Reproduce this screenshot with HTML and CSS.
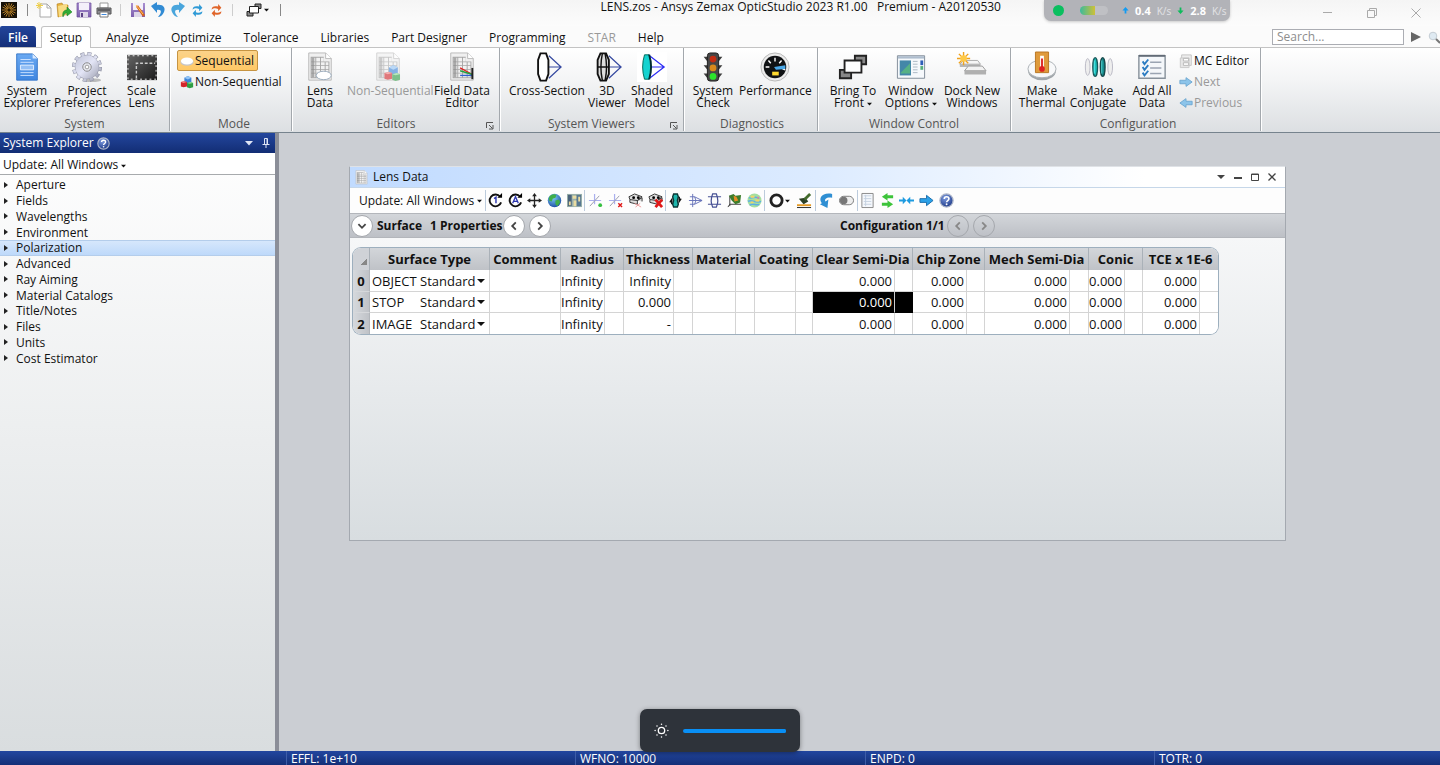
FILE: index.html
```
<!DOCTYPE html>
<html lang="en">
<head>
<meta charset="utf-8">
<title>LENS.zos - Ansys Zemax OpticStudio</title>
<link rel="stylesheet" href="styles.css">
</head>
<body>
<svg class="defs" aria-hidden="true">
  <defs>
    <linearGradient id="g-purple" x1="0" y1="0" x2="0" y2="1"><stop offset="0" stop-color="#a98fd0"/><stop offset="1" stop-color="#7d5fae"/></linearGradient>
    <linearGradient id="g-blue" x1="0" y1="0" x2="0" y2="1"><stop offset="0" stop-color="#6aa9f2"/><stop offset="1" stop-color="#3f86e0"/></linearGradient>
    <linearGradient id="g-gear" x1="0" y1="0" x2="32" y2="32" gradientUnits="userSpaceOnUse"><stop offset="0" stop-color="#b9bdd0"/><stop offset=".5" stop-color="#e3e5f6"/><stop offset="1" stop-color="#8d90a0"/></linearGradient>
    <linearGradient id="g-dark" x1="0" y1="0" x2="1" y2="1"><stop offset="0" stop-color="#666"/><stop offset="1" stop-color="#1b1b1b"/></linearGradient>
    <radialGradient id="g-help" cx=".4" cy=".3" r=".8"><stop offset="0" stop-color="#7d9be0"/><stop offset="1" stop-color="#14307f"/></radialGradient>
    <radialGradient id="g-globe" cx=".4" cy=".3" r=".8"><stop offset="0" stop-color="#7fd0f5"/><stop offset="1" stop-color="#123f9c"/></radialGradient>
    <symbol id="i-sheet" viewBox="0 0 32 32">
      <path d="M4 1h18l6 6v23H4z" fill="#f0f0f0" stroke="#b9b9b9"/><path d="M22 1v6h6" fill="#fff" stroke="#b9b9b9"/>
      <path d="M6 5h14v5h6v18H6z" fill="#a6a6a6"/><path d="M7 6h4v4H7zM12 6h4v4h-4zM17 6h3v4h-3zM7 11h4v3H7zM12 11h4v3h-4zM17 11h4v3h-4zM22 11h3v3h-3zM7 15h4v3H7zM12 15h4v3h-4zM17 15h4v3h-4zM22 15h3v3h-3zM7 19h4v3H7zM12 19h4v3h-4zM17 19h4v3h-4zM22 19h3v3h-3zM7 23h4v4H7zM12 23h4v4h-4zM17 23h4v4h-4zM22 23h3v4h-3z" fill="#f2f2f2"/><path d="M7 6h3v21H7z" fill="#8b8b8b" opacity=".7"/>
    </symbol>
    <symbol id="i-cubes" viewBox="0 0 16 16">
      <path d="M5 3l4-2 4 2v5l-4 2-4-2z" fill="#3b83d8"/><path d="M5 3l4-2 4 2-4 2z" fill="#93c4f5"/>
      <path d="M1 8l4-1 3 1v5l-4 1-3-1z" fill="#d3262b"/><path d="M1 8l4-1 3 1-4 1z" fill="#f48484"/>
      <path d="M8 9l4-1 3 1v5l-4 1-3-1z" fill="#2f9e44"/><path d="M8 9l4-1 3 1-4 1z" fill="#8fdd97"/>
    </symbol>
    <symbol id="i-help" viewBox="0 0 16 16">
      <circle cx="8" cy="8" r="7" fill="url(#g-help)" stroke="#aab3c8" stroke-width="1.400"/>
      <path d="M5.600 6.300c0-3.200 5-3.100 5-.1 0 1.800-2.500 1.900-2.500 3.700" fill="none" stroke="#fff" stroke-width="1.700"/><circle cx="8.100" cy="12" r="1" fill="#fff"/>
    </symbol>
    <symbol id="i-sync" viewBox="0 0 16 16">
      <path d="M2 7c0-4 3-5 8-4V0l4 4.500L10 9V6C7 5 4 5 2 7zM14 9c0 4-3 5-8 4v3l-4-4.500L6 7v3c3 1 6 1 8-1z"/>
    </symbol>
    <symbol id="i-wins" viewBox="0 0 32 32">
      <path d="M18 4h12v9H18zM2 19h12v9H2z" fill="#888" stroke="#222" stroke-width="2"/><path d="M7 9h18v13H7z" fill="#fff" stroke="#222" stroke-width="2"/>
    </symbol>
    <symbol id="i-tri" viewBox="0 0 6 4"><path d="M0 .5h6L3 3.800z"/></symbol>
    <symbol id="i-launch" viewBox="0 0 8 8"><path d="M.5 6V.5H7M3 3l3.500 3.500M7 3v4H3" fill="none" stroke="#555"/></symbol>
  </defs>
</svg>

<header class="titlebar">
  <nav class="quick" aria-label="Quick access">
    <button class="q" aria-label="Application menu"><svg viewBox="0 0 16 16"><path fill="#17120a" d="M0 0h16v16H0z"/><path d="M8 1v14M1 8h14M3 3l10 10M13 3L3 13M5 1.500l6 13M11 1.500l-6 13M1.500 5l13 6M1.500 11l13-6" stroke="#d9982c" stroke-width=".8"/><circle cx="8" cy="8" r="1.700" fill="#2a1a00"/></svg></button>
    <span class="bar first"></span>
    <button class="q" aria-label="New"><svg viewBox="0 0 16 16"><path d="M4 2h7l4 4v9H4z" fill="#fff" stroke="#a8a8a8"/><path d="M11 2v4h4" fill="none" stroke="#a8a8a8"/><path d="M3 0v7M0 3.500h7M1 1l4.500 5M5.500 1L1 6" stroke="#efcf49"/></svg></button>
    <button class="q" aria-label="Open"><svg viewBox="0 0 16 16"><path d="M1 2l5-1 1 2h5v9L2 15z" fill="#e7b33d" stroke="#b27c1b" stroke-width=".6"/><path d="M2 4l9-2v10L3 15z" fill="#f8dc83"/><path d="M7 15c-1-5 1-7 4-7V5l5 5-5 4v-3c-2 0-3 1-4 4z" fill="#31ab35" stroke="#16761f" stroke-width=".5"/></svg></button>
    <button class="q" aria-label="Save"><svg viewBox="0 0 16 16"><path d="M1 1h14v14H1z" fill="url(#g-purple)" stroke="#6b4b99" stroke-width=".7"/><path d="M3 1h10v7H3z" fill="#f4f0fa"/><path d="M4 10h8v5H4z" fill="#ddd6e8"/><path d="M5 11h2v4H5z" fill="#5c4285"/></svg></button>
    <button class="q" aria-label="Print"><svg viewBox="0 0 16 16"><path d="M4 1h8v5H4z" fill="#fff" stroke="#999"/><path d="M1 6h14v6H1z" fill="#8c8c92" stroke="#555"/><path d="M2 8h12" stroke="#333"/><path d="M4 10h8v5H4z" fill="#fff" stroke="#777"/><path d="M5.500 12.500h5" stroke="#4089dd"/></svg></button>
    <span class="bar pale"></span>
    <button class="q" aria-label="Save as"><svg viewBox="0 0 16 16"><path d="M1 1h14v14H1z" fill="url(#g-purple)"/><path d="M3 1h10v7H3z" fill="#f4f0fa"/><path d="M4 10h8v5H4z" fill="#ddd6e8"/><path d="M7 4l7 10" stroke="#d66220" stroke-width="2.500"/><path d="M6 3l7 9" stroke="#ffc75a"/></svg></button>
    <button class="q" aria-label="Undo"><svg viewBox="0 0 16 16"><path d="M1 4l6-4v3c6-1 9 3 7 7-1 3-4 5-6 5 4-4 4-8-1-7v3z" fill="#318bd4"/></svg></button>
    <button class="q" aria-label="Redo"><svg viewBox="0 0 16 16"><path d="M15 4L9 0v3C3 2 0 6 2 10c1 3 4 5 6 5-4-4-4-8 1-7v3z" fill="#49a5dc"/></svg></button>
    <button class="q blue" aria-label="Refresh"><svg><use href="#i-sync"/></svg></button>
    <button class="q orange" aria-label="Refresh all"><svg><use href="#i-sync"/></svg></button>
    <span class="bar pale"></span>
    <button class="q menu" aria-label="Windows"><svg><use href="#i-wins"/></svg><svg class="tri"><use href="#i-tri"/></svg></button>
    <span class="bar"></span>
  </nav>
  <h1 class="doc-title">LENS.zos - Ansys Zemax OpticStudio 2023 R1.00 &nbsp; Premium - A20120530</h1>
  <div class="win-controls">
    <button aria-label="Minimize window"><svg viewBox="0 0 12 12"><path d="M1 5.500h9"/></svg></button>
    <button aria-label="Restore window"><svg viewBox="0 0 12 12"><path d="M1.500 3.500h7v7h-7zM3.500 3.500v-2h7v7h-2"/></svg></button>
    <button aria-label="Close window"><svg viewBox="0 0 12 12"><path d="M1.500 1.500l9 9M10.500 1.500l-9 9"/></svg></button>
  </div>
</header>

<aside class="netmon" aria-label="Network monitor">
  <span class="dot"></span><span class="load"></span>
  <svg viewBox="0 0 8 8" class="net up"><path d="M4 0l3.500 4H5v3.500H3V4H.5z"/></svg><b>0.4</b><span class="unit">K/s</span>
  <svg viewBox="0 0 8 8" class="net down"><path d="M4 8l3.500-4H5V.5H3V4H.5z"/></svg><b>2.8</b><span class="unit">K/s</span>
</aside>

<nav class="tabs" aria-label="Ribbon tabs">
  <button class="file">File</button>
  <button class="tab active">Setup</button>
  <button class="tab">Analyze</button>
  <button class="tab">Optimize</button>
  <button class="tab">Tolerance</button>
  <button class="tab">Libraries</button>
  <button class="tab">Part Designer</button>
  <button class="tab">Programming</button>
  <button class="tab" disabled>STAR</button>
  <button class="tab">Help</button>
  <form class="search">
    <input type="text" placeholder="Search..." aria-label="Search">
    <button type="button" aria-label="Go"><svg viewBox="0 0 12 12"><path d="M1 1l10 5-10 5z" fill="#666"/></svg></button>
    <button type="button" aria-label="Find"><svg viewBox="0 0 12 12"><circle cx="5" cy="5" r="3.800" fill="#dfeaf2" stroke="#c4cdd4"/><path d="M8 8l4 4" stroke="#777" stroke-width="2"/></svg></button>
  </form>
</nav>

<section class="ribbon" aria-label="Setup">
  <div class="group g-system">
    <div class="tools">
      <button class="tool w54"><svg viewBox="0 0 32 32"><path d="M5 2h17l5 5v23H5z" fill="url(#g-blue)" stroke="#3676c9"/><path d="M22 2v5h5" fill="#d9eaff"/><path d="M9 8h11M9 11h14M9 22h14M9 25h14" stroke="#cfe3ff"/><path d="M9 14h14v5H9z" fill="#93bff5" stroke="#e6f1ff"/></svg>System<br>Explorer</button>
      <button class="tool w66"><svg viewBox="0 0 32 32"><ellipse cx="21" cy="30" rx="10" ry="2" fill="#bbb"/><circle cx="16" cy="16" r="14" fill="none" stroke="#8b8ea0" stroke-width="4" stroke-dasharray="4.200 3.130"/><circle cx="16" cy="16" r="8.500" fill="none" stroke="#8b8ea0" stroke-width="9"/><circle cx="16" cy="16" r="14" fill="none" stroke="url(#g-gear)" stroke-width="3" stroke-dasharray="3.400 3.930" stroke-dashoffset="-.4"/><circle cx="16" cy="16" r="8.500" fill="none" stroke="url(#g-gear)" stroke-width="8"/><circle cx="16" cy="16" r="4.500" fill="#e9eaf2" stroke="#888"/><circle cx="16" cy="16" r="2" fill="#fff" stroke="#999"/></svg>Project<br>Preferences</button>
      <button class="tool w43"><svg viewBox="0 0 32 32"><path d="M0 3h32v27H0z" fill="url(#g-dark)"/><path d="M1 4h30v25H1z" fill="none" stroke="#eee" stroke-dasharray="2 3"/><path d="M10 28V12h20" fill="none" stroke="#ccc" stroke-width="1.500" stroke-dasharray="3 2"/></svg>Scale<br>Lens</button>
    </div>
    <h2>System</h2>
  </div>
  <div class="group g-mode">
    <div class="stack">
      <button class="row on"><svg viewBox="0 0 16 16"><ellipse cx="8" cy="9" rx="7.500" ry="4.500" fill="#c5c5ca"/><ellipse cx="8" cy="8" rx="7" ry="4" fill="#fff"/></svg>Sequential</button>
      <button class="row"><svg><use href="#i-cubes"/></svg>Non-Sequential</button>
    </div>
    <h2>Mode</h2>
  </div>
  <div class="group g-editors">
    <div class="tools">
      <button class="tool w54"><svg viewBox="0 0 32 32"><use href="#i-sheet"/><ellipse cx="20" cy="25" rx="8" ry="4.500" fill="#fff" stroke="#9ab"/></svg>Lens<br>Data</button>
      <button class="tool w82" disabled><svg viewBox="0 0 32 32"><use href="#i-sheet"/><use href="#i-cubes" x="11" y="13" width="19" height="19"/></svg>Non-Sequential</button>
      <button class="tool w66"><svg viewBox="0 0 32 32"><use href="#i-sheet"/><path d="M14 17l13 7" stroke="#e02020" stroke-width="1.500"/><path d="M14 20l13 4" stroke="#20a040" stroke-width="1.500"/><path d="M14 25h13" stroke="#3060d0" stroke-width="1.500"/><path d="M27 17v12" stroke="#222" stroke-width="2"/></svg>Field Data<br>Editor</button>
    </div>
    <h2>Editors</h2>
    <button class="launch" aria-label="Editors options"><svg><use href="#i-launch"/></svg></button>
  </div>
  <div class="group g-viewers">
    <div class="tools">
      <button class="tool w78"><svg viewBox="0 0 32 32"><path d="M18 4l13 12-13 12M14 16h17" fill="none" stroke="#3549a0" stroke-width="1.300"/><path d="M9 1.500h6l2.500 7v15l-2.500 7H9l-2.500-7v-15z" fill="#fff" stroke="#111" stroke-width="2"/></svg>Cross-Section</button>
      <button class="tool w42"><svg viewBox="0 0 32 32"><path d="M18 4l13 12-13 12M17 16h14" fill="none" stroke="#3549a0" stroke-width="1.300"/><path d="M9 1.500h6l3 7v15l-3 7H9l-3-7v-15z" fill="#ddd" stroke="#111" stroke-width="2"/><path d="M11 2q-3 14 0 28M14 2q3 14 0 28M6 16h12" fill="none" stroke="#111" stroke-width="1.500"/></svg>3D<br>Viewer</button>
      <button class="tool w48"><svg viewBox="0 0 32 32"><path fill="#fff" d="M0 0h32v32H0z"/><path d="M12 3l17 13-17 13M13 16h16" fill="none" stroke="#2d2df5" stroke-width="1.300"/><path d="M8 3h5q4 13 0 26H8Q4 16 8 3z" fill="#14d3d0" stroke="#065"/><path d="M13 3q4 13 0 26" fill="none" stroke="#052c30" stroke-width="2"/></svg>Shaded<br>Model</button>
    </div>
    <h2>System Viewers</h2>
    <button class="launch" aria-label="Viewer options"><svg><use href="#i-launch"/></svg></button>
  </div>
  <div class="group g-diag">
    <div class="tools">
      <button class="tool w52"><svg viewBox="0 0 32 32"><path d="M6 5h20l-4 5H10zM6 14h20l-4 5H10zM6 23h20l-4 5H10z" fill="#3d3d3d"/><rect x="10" y="1" width="12" height="30" rx="3" fill="#474747" stroke="#1f1f1f"/><circle cx="16" cy="7.500" r="3.600" fill="#c22c12"/><circle cx="16" cy="17" r="3.600" fill="#d9891c"/><circle cx="16" cy="26" r="3.600" fill="#2ce32c"/></svg>System<br>Check</button>
      <button class="tool w72"><svg viewBox="0 0 32 32"><circle cx="16" cy="16" r="15" fill="#ececec" stroke="#b5b5b5"/><circle cx="16" cy="16" r="12" fill="#101214"/><path d="M16 6v4M9 9l2.500 3M23 9l-2.500 3M6 16h4M24 18l3 1" stroke="#fff" stroke-width="1.500"/><path d="M15 16l12-2v4l-10 1z" fill="#4aa8e8"/><path d="M13 21h7v4h-7z" fill="#ffd92f"/></svg>Performance</button>
    </div>
    <h2>Diagnostics</h2>
  </div>
  <div class="group g-window">
    <div class="tools">
      <button class="tool w54"><svg><use href="#i-wins"/></svg>Bring To<br>Front <svg class="tri"><use href="#i-tri"/></svg></button>
      <button class="tool w62"><svg viewBox="0 0 32 32"><path d="M1.500 4h29v24h-29z" fill="#f6f9fc" stroke="#7e8a96"/><path d="M2 4.500h28v2.500H2z" fill="#aebdce"/><path d="M4 9h12v16H4z" fill="#4387a8"/><path d="M5 22l10-10v11H5z" fill="#56b185"/><path d="M18 10h5M18 13h5M18 16h5M18 19h5M18 22h5" stroke="#a9b6c2"/><path d="M26 9h3v5h-3z" fill="#2e5fb8"/><path d="M26 15h3v4h-3z" fill="#58b17c"/></svg>Window<br>Options <svg class="tri"><use href="#i-tri"/></svg></button>
      <button class="tool w60"><svg viewBox="0 0 32 32"><path d="M7 9h15l3 4H3z" fill="#f6f6f6" stroke="#aaa"/><path d="M3 13h22v3H3z" fill="#b7b7b7"/><path d="M12 15h15l4 5H8z" fill="#f2f2f2" stroke="#999"/><path d="M8 20h23v4H8z" fill="#b0b0b0"/><path d="M7 0v14M0 7h14M2 2l10 10M12 2L2 12" stroke="#f0a21c" stroke-width="1.500"/><circle cx="7" cy="7" r="3.500" fill="#ffc945"/></svg>Dock New<br>Windows</button>
    </div>
    <h2>Window Control</h2>
  </div>
  <div class="group g-config">
    <div class="tools">
      <button class="tool w52"><svg viewBox="0 0 32 32"><ellipse cx="16" cy="20" rx="15" ry="10" fill="#a0a6aa"/><ellipse cx="16" cy="18" rx="15" ry="9.500" fill="#f8f9fa" stroke="#a9afb3"/><path d="M9 0h14v22H9z" fill="#df9a3b" stroke="#b87420"/><path d="M16 4v12" stroke="#fff" stroke-width="4"/><path d="M16 7v10" stroke="#d22" stroke-width="2"/><circle cx="16" cy="18" r="3" fill="#d22"/></svg>Make<br>Thermal</button>
      <button class="tool w60"><svg viewBox="0 0 32 32"><ellipse cx="5" cy="16" rx="2.500" ry="9" fill="#eee" stroke="#b9b9c4"/><ellipse cx="29" cy="16" rx="2.500" ry="9" fill="#eee" stroke="#b9b9c4"/><ellipse cx="13" cy="16" rx="2.500" ry="10" fill="#1cc1bd" stroke="#16585a" stroke-width="1.500"/><ellipse cx="21" cy="16" rx="2.500" ry="10" fill="#168c8d" stroke="#16484a" stroke-width="1.500"/><path d="M12 9v14M20 9v14" stroke="#7ff" opacity=".7"/></svg>Make<br>Conjugate</button>
      <button class="tool w48"><svg viewBox="0 0 32 32"><path d="M2 4h28v24H2z" fill="#f4f7fa" stroke="#87919b" stroke-width="1.500"/><path d="M2 4h28" stroke="#626b76" stroke-width="2"/><path d="M14 11h12M14 17h12M14 23h12" stroke="#9aa4b2" stroke-width="1.500"/><path d="M6 10l2 3 4-5M6 16l2 3 4-5M6 22l2 3 4-5" fill="none" stroke="#2b7cc2" stroke-width="2"/></svg>Add All<br>Data</button>
    </div>
    <div class="stack">
      <button class="row"><svg viewBox="0 0 16 16"><path d="M3 1h11v12H3z" fill="#eee" stroke="#c0c0c0"/><path d="M1.500 4.500h10v11h-10z" fill="#e6e6e6" stroke="#c8c8c8"/><path d="M5 5h6v3H5zM5 10h6v3H5z" fill="#fff" stroke="#b4b4b4"/></svg>MC Editor</button>
      <button class="row" disabled><svg viewBox="0 0 16 16"><path d="M1 6h7V3l7 5-7 5v-3H1z" fill="#8cc4ea" stroke="#6aa6d0"/></svg>Next</button>
      <button class="row" disabled><svg viewBox="0 0 16 16"><path d="M15 6H8V3L1 8l7 5v-3h7z" fill="#8cc4ea" stroke="#6aa6d0"/></svg>Previous</button>
    </div>
    <h2>Configuration</h2>
  </div>
</section>

<main class="workspace">
  <aside class="explorer">
    <header class="ex-head"><h2>System Explorer</h2><button aria-label="Help"><svg><use href="#i-help"/></svg></button>
      <span class="ex-actions"><button aria-label="Panel menu"><svg class="down" viewBox="0 0 8 5"><path d="M0 0h8L4 4.500z" fill="#dfe5f5"/></svg></button><button aria-label="Pin panel"><svg class="pin" viewBox="0 0 8 10"><path d="M2.500 6V.5h3V6M.5 6.500h7M4 6.500V10M5 1v5" fill="none" stroke="#dfe5f5"/></svg></button></span>
    </header>
    <div class="ex-update"><button>Update: All Windows <svg class="tri"><use href="#i-tri"/></svg></button></div>
    <ul class="tree">
      <li><button>Aperture</button></li>
      <li><button>Fields</button></li>
      <li><button>Wavelengths</button></li>
      <li><button>Environment</button></li>
      <li class="hot"><button>Polarization</button></li>
      <li><button>Advanced</button></li>
      <li><button>Ray Aiming</button></li>
      <li><button>Material Catalogs</button></li>
      <li><button>Title/Notes</button></li>
      <li><button>Files</button></li>
      <li><button>Units</button></li>
      <li><button>Cost Estimator</button></li>
    </ul>
  </aside>

  <section class="desktop">
    <article class="lens">
      <header class="lens-head">
        <svg class="doc" viewBox="0 0 32 32"><use href="#i-sheet"/></svg><h2>Lens Data</h2>
        <span class="lens-ctl">
          <button aria-label="Window menu"><svg viewBox="0 0 10 10"><path d="M1 3h8L5 7z" fill="#444"/></svg></button>
          <button aria-label="Minimize"><svg viewBox="0 0 10 10"><path d="M1 6h8" stroke="#444" stroke-width="2"/></svg></button>
          <button aria-label="Maximize"><svg viewBox="0 0 10 10"><path d="M1.500 2h7v6.500h-7zM1 2.500h8" fill="none" stroke="#444"/></svg></button>
          <button aria-label="Close"><svg viewBox="0 0 10 10"><path d="M1.500 1.500l7 7M8.500 1.500l-7 7" stroke="#444" stroke-width="1.300"/></svg></button>
        </span>
      </header>
      <div class="toolbar">
        <button class="upd">Update: All Windows <svg class="tri"><use href="#i-tri"/></svg></button>
        <div class="tg five">
          <button aria-label="Update once"><svg viewBox="0 0 16 16"><path d="M13 4a6.300 6.300 0 1 0 1 6" fill="none" stroke="#111" stroke-width="2"/><path d="M10 5h5V0z"/><path d="M6.500 6L8.500 4.500V11" fill="none" stroke="#2c35b0" stroke-width="1.500"/></svg></button>
          <button aria-label="Update all"><svg viewBox="0 0 16 16"><path d="M13 4a6.300 6.300 0 1 0 1 6" fill="none" stroke="#111" stroke-width="2"/><path d="M10 5h5V0z"/><path d="M5 11l3-7 3 7M6 9h4" fill="none" stroke="#2c35b0" stroke-width="1.400"/></svg></button>
          <button aria-label="Fit"><svg viewBox="0 0 16 16"><path d="M8 2v12M2 8h12" stroke="#222" stroke-width="1.400"/><path d="M8 0l2.500 3.500h-5zM8 16l2.500-3.500h-5zM0 8l3.500-2.500v5zM16 8l-3.500-2.500v5z" fill="#222"/></svg></button>
          <button aria-label="Globe"><svg viewBox="0 0 16 16"><circle cx="8" cy="8" r="7.200" fill="url(#g-globe)"/><path d="M2 5c2-4 6-4 8-3l-1 3-3 1-1 3-3-1zM9 8l4-1 1 3-3 4-2-2z" fill="#3fae4a"/></svg></button>
          <button aria-label="Settings map"><svg viewBox="0 0 16 16"><path d="M0 1h16v14H0z" fill="#9bb1ab"/><path d="M1 2h4v12H1z" fill="#49627a"/><path d="M10 2h5v12h-5z" fill="#577891"/><path d="M6 3h4v3H6zM7 8h3v6H7zM12 4h2v5h-2zM2 9h2v4H2z" fill="#eadca1"/></svg></button>
        </div>
        <div class="tg four">
          <button aria-label="Add surface"><svg viewBox="0 0 16 16"><path d="M7 1v11M1 8h13" stroke="#aab0ee" stroke-width="1.300"/><path d="M2 14L12 3" stroke="#99a"/><circle cx="13" cy="13" r="2" fill="#35c040"/></svg></button>
          <button aria-label="Delete surface"><svg viewBox="0 0 16 16"><path d="M7 1v11M1 8h13" stroke="#aab0ee" stroke-width="1.300"/><path d="M2 14L12 3" stroke="#99a"/><path d="M11 11l4 4M15 11l-4 4" stroke="#e01818" stroke-width="1.500"/></svg></button>
          <button aria-label="Add tolerance"><svg viewBox="0 0 16 16"><path d="M1 4l6-3 8 3-5 4-8-1zM2 7v3l8 2V8M10 8l5-3v4" fill="#ddd" stroke="#333"/><circle cx="6" cy="5" r="1.500"/><circle cx="11" cy="5" r="1.500"/><path d="M7 11l7 4M8 15l5-4" stroke="#ef9d9d"/></svg></button>
          <button aria-label="Remove tolerance"><svg viewBox="0 0 16 16"><path d="M1 4l6-3 8 3-5 4-8-1zM2 7v3l8 2V8M10 8l5-3v4" fill="#ddd" stroke="#333"/><circle cx="6" cy="5" r="1.500"/><circle cx="11" cy="5" r="1.500"/><path d="M8 7l7 8M15 7l-7 8" stroke="#e01818" stroke-width="3"/></svg></button>
        </div>
        <div class="tg five">
          <button aria-label="Flip lens"><svg viewBox="0 0 16 16"><path d="M6 1h4l1 3-1 4 1 4-1 3H6l-1-3 1-4-1-4z" fill="#1fb7ad" stroke="#0a3836" stroke-width="1.500"/><path d="M4 12V7l-2 3M12 4v5l2-3" fill="none" stroke="#111" stroke-width="1.500"/></svg></button>
          <button aria-label="Draw layout"><svg viewBox="0 0 16 16"><path d="M5 1v14M1 8h14M2 4h5q3 4 0 8H2M7 4l8 4-8 4" fill="none" stroke="#6470b8"/></svg></button>
          <button aria-label="Draw element"><svg viewBox="0 0 16 16"><path d="M1 4h14M1 12h14M6 1q-3 7 0 14h4q3-7 0-14z" fill="none" stroke="#465094" stroke-width="1.300"/></svg></button>
          <button aria-label="Surface plot"><svg viewBox="0 0 16 16"><path d="M3 14V3M3 12h12M3 12l-2 3" stroke="#333"/><path d="M2 3l5-2 2 2 6-1-1 8-5 2-4-4z" fill="#3d7d2c"/><path d="M7 3l3 1 2 4-4 1z" fill="#e78d25"/></svg></button>
          <button aria-label="Contour plot"><svg viewBox="0 0 16 16"><circle cx="8" cy="8" r="7.500" fill="#a4dfa0"/><path d="M2 5c4 2 6-3 11 1M1 9c5-3 8 3 14 0M3 13c3-3 7 1 10-1" fill="none" stroke="#5caee6" stroke-width="1.500"/><path d="M4 3h4v2H4zM9 7h4v2H9zM4 9h3v2H4z" fill="#f3d668"/><path d="M11 4h2v2h-2z" fill="#e6809a"/></svg></button>
        </div>
        <div class="tg aperture">
          <button class="ring" aria-label="Aperture"><svg viewBox="0 0 16 16"><circle cx="8" cy="8" r="6" fill="#fff" stroke="#222" stroke-width="3"/></svg><svg class="tri"><use href="#i-tri"/></svg></button>
          <button aria-label="Coating"><svg viewBox="0 0 16 16"><path d="M0 13h15" stroke="#e59a24" stroke-width="2"/><path d="M0 15.500h15" stroke="#222"/><path d="M2 6l5 6 5-3-3-4z" fill="#2d4027"/><path d="M8 7l6-6" stroke="#436b2c" stroke-width="3"/></svg></button>
        </div>
        <div class="tg two">
          <button aria-label="Reverse"><svg viewBox="0 0 16 16"><path d="M14 1C3-1-1 6 3 11l-2 1 8 4 1-9-3 2C5 6 9 4 14 5z" fill="#2f8fd3"/></svg></button>
          <button aria-label="Toggle"><svg viewBox="0 0 16 16"><rect x=".5" y="3.500" width="15" height="9" rx="4.500" fill="#eee" stroke="#777"/><rect x="1" y="4" width="8" height="8" rx="4" fill="#777"/></svg></button>
        </div>
        <div class="tg five">
          <button aria-label="Table"><svg viewBox="0 0 16 16"><path d="M2 .5h12v15H2z" fill="#f5f8fc" stroke="#888"/><path d="M4 3h8M4 6h8M4 9h8M4 12h8M6 2v12" stroke="#c5d1e0"/></svg></button>
          <button aria-label="Swap"><svg viewBox="0 0 16 16"><path d="M2 4l6-4v2.500h6v3H8V8zM14 12L8 8v2.500H2v3h6V16z" fill="#3dc43a"/></svg></button>
          <button aria-label="Collapse"><svg viewBox="0 0 16 16"><path d="M0 7h4V4l4 4-4 4V9H0zM16 7h-4V4L8 8l4 4V9h4z" fill="#1e9be0"/></svg></button>
          <button aria-label="Go to"><svg viewBox="0 0 16 16"><path d="M1 6h7V2.500L15 8l-7 5.500V10H1z" fill="#2ba1e8" stroke="#1b6dab"/></svg></button>
          <button aria-label="Help"><svg><use href="#i-help"/></svg></button>
        </div>
      </div>
      <div class="surface">
        <button class="round" aria-label="Expand properties"><svg viewBox="0 0 10 10"><path d="M2 3.500L5 6.500l3-3"/></svg></button>
        <b class="s-name"><span>Surface</span><span>1 Properties</span></b>
        <button class="round" aria-label="Previous surface"><svg viewBox="0 0 10 10"><path d="M6.500 2L3.500 5l3 3"/></svg></button>
        <button class="round" aria-label="Next surface"><svg viewBox="0 0 10 10"><path d="M3.500 2l3 3-3 3"/></svg></button>
        <b class="s-conf">Configuration 1/1</b>
        <button class="round" disabled aria-label="Previous configuration"><svg viewBox="0 0 10 10"><path d="M6.500 2L3.500 5l3 3"/></svg></button>
        <button class="round" disabled aria-label="Next configuration"><svg viewBox="0 0 10 10"><path d="M3.500 2l3 3-3 3"/></svg></button>
      </div>
      <div class="lens-body">
        <div class="grid-frame">
        <table class="grid">
          <colgroup><col class="c17"><col class="c48"><col class="c72"><col class="c71"><col class="c44"><col class="c19"><col class="c50"><col class="c19"><col class="c43"><col class="c19"><col class="c41"><col class="c17"><col class="c82"><col class="c18"><col class="c54"><col class="c18"><col class="c85"><col class="c19"><col class="c36"><col class="c18"><col class="c57"><col class="c18"></colgroup>
          <thead><tr><th class="corner" aria-label="Select all"></th><th colspan="2">Surface Type</th><th>Comment</th><th colspan="2">Radius</th><th colspan="2">Thickness</th><th colspan="2">Material</th><th colspan="2">Coating</th><th colspan="2">Clear Semi-Dia</th><th colspan="2">Chip Zone</th><th colspan="2">Mech Semi-Dia</th><th colspan="2">Conic</th><th colspan="2">TCE x 1E-6</th></tr></thead>
          <tbody>
            <tr><th>0</th><td class="nm">OBJECT</td><td class="ty"><span class="sel"><select aria-label="Surface 0 type"><option>Standard</option></select></span></td><td></td><td>Infinity</td><td></td><td>Infinity</td><td></td><td></td><td></td><td></td><td></td><td>0.000</td><td></td><td>0.000</td><td></td><td>0.000</td><td></td><td>0.000</td><td></td><td>0.000</td><td></td></tr>
            <tr><th>1</th><td class="nm">STOP</td><td class="ty"><span class="sel"><select aria-label="Surface 1 type"><option>Standard</option></select></span></td><td></td><td>Infinity</td><td></td><td>0.000</td><td></td><td></td><td></td><td></td><td></td><td class="cur">0.000</td><td class="cur"></td><td>0.000</td><td></td><td>0.000</td><td></td><td>0.000</td><td></td><td>0.000</td><td></td></tr>
            <tr><th>2</th><td class="nm">IMAGE</td><td class="ty"><span class="sel"><select aria-label="Surface 2 type"><option>Standard</option></select></span></td><td></td><td>Infinity</td><td></td><td>-</td><td></td><td></td><td></td><td></td><td></td><td>0.000</td><td></td><td>0.000</td><td></td><td>0.000</td><td></td><td>0.000</td><td></td><td>0.000</td><td></td></tr>
          </tbody>
        </table>
        </div>
      </div>
    </article>
  </section>
</main>

<footer class="status"><span></span><span>EFFL: 1e+10</span><span>WFNO: 10000</span><span>ENPD: 0</span><span>TOTR: 0</span></footer>

<div class="brightness">
  <svg viewBox="0 0 16 16"><circle cx="8" cy="8" r="3.400" fill="none" stroke="#fff" stroke-width="1.400"/><g fill="#fff"><circle cx="8" cy="1.200" r=".8"/><circle cx="8" cy="14.800" r=".8"/><circle cx="1.200" cy="8" r=".8"/><circle cx="14.800" cy="8" r=".8"/><circle cx="3.200" cy="3.200" r=".8"/><circle cx="12.800" cy="3.200" r=".8"/><circle cx="3.200" cy="12.800" r=".8"/><circle cx="12.800" cy="12.800" r=".8"/></g></svg>
  <input type="range" min="0" max="100" value="100" aria-label="Brightness">
</div>
</body>
</html>
```

FILE: styles.css
```
* { box-sizing: border-box; }
html, body { height: 100%; }
body { margin: 0; display: flex; flex-direction: column; overflow: hidden; background: #fbfbfb; color: #111; font: 12px/16px "Open Sans", "Noto Sans", sans-serif; }
button, select, input { font: inherit; color: inherit; margin: 0; }
button { padding: 0; border: 0; background: none; }
h1, h2 { margin: 0; font-size: 12px; font-weight: 400; }
svg { display: block; flex: none; overflow: visible; }
.defs { position: absolute; width: 0; height: 0; }
.tri { width: 5px; height: 4px; display: inline-block; vertical-align: middle; fill: #111; }

.titlebar { height: 26px; display: grid; grid-template-columns: 606fr auto 443fr; background: linear-gradient(#f5f5f5, #fcfcfc); flex: none; }
.quick { display: flex; align-items: center; height: 20px; }
.q { width: 20px; display: flex; justify-content: center; }
.q:first-child { width: 18px; }
.q svg { width: 16px; height: 16px; }
.q.blue { fill: #2f9ad6; width: 19px; }
.q.orange { fill: #e0652a; width: 19px; }
.q.blue svg, .q.orange svg { width: 13px; height: 13px; }
.q.menu { width: 34px; align-items: center; gap: 2px; }
.q.menu .tri { width: 5px; height: 4px; }
.bar { width: 1px; height: 12px; background: #888; margin: 0 7px 0 6px; }
.bar.first { margin: 0 6px 0 9px; }
.bar.pale { background: #cdcdcd; }
.doc-title { line-height: 14px; white-space: pre; }
.win-controls { display: flex; justify-content: flex-end; align-items: flex-start; gap: 32px; padding: 7px 18px 0 0; }
.win-controls svg { width: 12px; height: 12px; fill: none; stroke: #aaa; }

.netmon { position: absolute; top: 0; right: 210px; width: 186px; height: 21px; padding: 0 8px 0 9px; display: flex; align-items: center; gap: 6px; background: #b2b3b8; border-radius: 0 0 7px 7px; color: #fff; font-size: 11px; box-shadow: 0 1px 3px #0003; }
.dot { flex: none; width: 11px; height: 11px; border-radius: 6px; background: #0abf5f; margin-right: 10px; }
.load { flex: none; width: 28px; height: 9px; border-radius: 5px; background: linear-gradient(90deg, #3cbb9c, #cfc037 54%, #bfc0c4 54%); margin-right: 8px; }
.net { width: 7px; height: 7px; }
.net.up { fill: #109bf3; }
.net.down { fill: #0dbb5b; }
.netmon .unit { color: #e3e3e6; font-size: 10px; }

.tabs { display: flex; height: 22px; border-bottom: 1px solid #c3c3c3; flex: none; }
.file { width: 36px; height: 21px; line-height: 21px; padding-top: 1px; background: linear-gradient(#23459b, #142f78); color: #fff; border-radius: 2px 3px 0 0; margin-right: 5px; font-weight: 600; }
.tab { padding: 1px 11px 0; height: 22px; line-height: 21px; }
.tab.active { width: 50px; padding: 0; background: #fff; border: 1px solid #c3c3c3; border-bottom: 0; border-radius: 3px 3px 0 0; margin-right: 4px; }
.tab:disabled { color: #999; }
.search { display: flex; align-items: center; gap: 6px; margin-left: auto; }
.search input { width: 132px; height: 16px; border: 1px solid #abadb3; background: #fff; padding: 0 4px; line-height: 14px; }
.search input::placeholder { color: #8d8d8d; opacity: 1; }
.search svg { width: 12px; height: 12px; }

.ribbon { display: flex; height: 85px; flex: none; background: linear-gradient(#fff, #f3f4f5 40%, #dcdfe2); border-bottom: 1px solid #76838d; }
.group { display: grid; grid-template: 69px 14px / auto 1fr; border-right: 1px solid #a3a8ad; box-shadow: 1px 0 #fff; position: relative; height: 83px; }
.group h2 { grid-column: 1 / -1; grid-row: 2; text-align: center; color: #555; line-height: 14px; }
.g-system { width: 170px; }
.g-mode { width: 122px; padding-left: 7px; }
.g-editors { width: 208px; padding-left: 1px; }
.g-viewers { width: 184px; padding-left: 8px; }
.g-diag { width: 134px; padding-left: 3px; }
.g-window { width: 193px; padding-left: 8px; }
.g-config { width: 250px; padding-left: 5px; }
.g-viewers h2, .g-window h2 { padding-right: 8px; }
.tools { display: flex; padding-top: 3px; }
.tool { display: flow-root; align-self: start; line-height: 12px; text-align: center; white-space: nowrap; }
.tool > svg:first-child { width: 30px; height: 30px; margin: 1px auto 3px; }
.tool:disabled { color: #999; }
.tool:disabled > svg { opacity: .6; }
.w42 { width: 42px; } .w43 { width: 43px; } .w48 { width: 48px; } .w52 { width: 52px; } .w54 { width: 54px; }
.w60 { width: 60px; } .w62 { width: 62px; } .w66 { width: 66px; } .w72 { width: 72px; } .w78 { width: 78px; } .w82 { width: 82px; }
.stack { display: flex; flex-direction: column; align-items: flex-start; padding-top: 2px; }
.row { display: flex; align-items: center; height: 21px; padding: 0 3px 0 2px; border: 1px solid transparent; white-space: nowrap; }
.row svg { width: 14px; height: 14px; margin-right: 1px; }
.row.on { background: linear-gradient(#fbd38a, #ffc865); border-color: #c69442; border-radius: 2px; }
.row:disabled { color: #999; }
.launch { position: absolute; right: 5px; bottom: 1px; }
.launch svg { width: 8px; height: 8px; }

.workspace { flex: 1; min-height: 0; display: flex; background: #cbced3; }
.explorer { width: 279px; flex: none; border-right: 4px solid #8b8e98; background: linear-gradient(#fff, #d9dddf); }
.ex-head { height: 20px; display: flex; align-items: center; gap: 3px; padding: 0 3px; color: #fff; background: linear-gradient(#23469d, #122d74); }
.ex-head button > svg { width: 13px; height: 13px; }
.ex-actions { display: flex; align-items: center; gap: 9px; margin-left: auto; padding-right: 2px; }
.ex-head .ex-actions .down { width: 8px; height: 5px; }
.ex-head .ex-actions .pin { width: 8px; height: 10px; }
.ex-update { height: 22px; padding: 4px 3px 1px; background: #fff; border-bottom: 1px solid #a7aaad; line-height: 16px; }
.ex-update button { display: block; }
.tree { list-style: none; margin: 2px 0 0; padding: 0; height: 189px; display: grid; grid-auto-rows: 1fr; }
.tree button { display: flex; align-items: center; width: 100%; height: 100%; line-height: 15px; }
.tree button::before { content: ""; border: 3px solid transparent; border-left: 4px solid #222; border-right: 0; margin: 0 8px 0 4px; }
.hot { background: linear-gradient(#d8e8fc, #bcd8fa); box-shadow: inset 0 1px #b4cdeb, inset 0 -1px #b4cdeb; }

.desktop { flex: 1; min-width: 0; padding: 33px 154px 210px 70px; display: flex; }
.lens { flex: 1; min-width: 0; display: flex; flex-direction: column; border: 1px solid #a4a9b0; border-top-color: #dfe2e6; background: #fff; }
.lens-head { height: 21px; display: flex; align-items: center; background: linear-gradient(90deg, #c1dbff, #dcebff 50%, #fff 85%); border-bottom: 1px solid #c6d7e9; padding: 0 8px 0 4px; }
.doc { width: 15px; height: 15px; margin-right: 4px; }
.lens-ctl { display: flex; gap: 7px; margin-left: auto; }
.lens-ctl svg { width: 10px; height: 10px; }
.toolbar { height: 25px; display: flex; align-items: center; padding: 2px 0; background: #fdfdfd; }
.upd { width: 122px; margin: 0 4px 0 9px; text-align: left; white-space: nowrap; }
.tg { display: flex; height: 21px; border-left: 1px solid #bccbdc; align-items: center; }
.tg button { flex: 1; display: flex; justify-content: center; align-items: center; }
.tg button svg:first-child { width: 15px; height: 15px; }
.five { width: 99px; }
.four { width: 81px; }
.aperture { width: 51px; }
.two { width: 42px; }
.tg .ring { flex: 0 0 28px; gap: 1px; }
.surface { height: 25px; display: flex; align-items: center; background: linear-gradient(#d3d6da, #bdc0c6); border: solid #b3b6bb; border-width: 1px 0; padding-left: 1px; }
.round { width: 22px; height: 22px; border: 1px solid #a4a7ac; border-radius: 50%; background: #fff; display: flex; align-items: center; justify-content: center; margin-right: 4px; flex: none; }
.round svg { width: 12px; height: 12px; fill: none; stroke: #444; stroke-width: 1.500; }
.round:disabled { background: none; border-color: #a5a8ad; }
.round:disabled svg { stroke: #888; }
.s-name { display: flex; gap: 8px; width: 122px; margin-right: 4px; white-space: nowrap; }
.s-conf { width: 102px; margin: 0 5px 0 285px; white-space: nowrap; }
.lens-body { flex: 1; padding: 10px 3px; background: linear-gradient(#f6f7f8, #d8dde0); }
.grid-frame { width: fit-content; border-radius: 8px; overflow: hidden; box-shadow: 0 0 0 1px #9dafbe; background: #fff; }
.grid { table-layout: fixed; width: 865px; border-collapse: separate; border-spacing: 0; font-size: 13px; }
.grid th, .grid td { padding: 0; height: 21px; line-height: 18px; white-space: nowrap; }
.grid thead th { height: 22px; font-weight: 700; background: linear-gradient(#d3d6da, #bfc2c7); border-right: 1px solid #aab1b8; }
.grid thead .corner { background: linear-gradient(135deg, transparent 75%, #888 75%) center / 12px 12px no-repeat, #cfd2d7; }
.grid tbody th { font-weight: 700; background: linear-gradient(90deg, #d6d9dd, #bfc2c7); border-right: 1px solid #b1b5ba; border-bottom: 1px solid #d6d8db; }
.grid td { text-align: right; padding-right: 2px; border-right: 1px solid #d4d4d4; border-bottom: 1px solid #d4d4d4; background: #fff; }
.grid tbody tr:first-child > * { height: 22px; }
.grid tbody tr:last-child > * { border-bottom: 0; }
.grid tr > :last-child { border-right: 0; }
.grid td.nm { text-align: left; border-right: 0; padding-left: 2px; }
.grid td.ty { padding-right: 4px; }
.grid td.cur { background: #000; color: #fff; border-bottom-color: #000; border-right-color: #ccc; }
.grid td.cur + td.cur { border-right-color: #000; }
.sel { display: flex; align-items: center; justify-content: space-between; }
.sel select { appearance: none; border: 0; background: none; padding: 0 0 0 2px; height: 18px; }
.sel::after { content: ""; border: 4px solid transparent; border-top: 4px solid #111; border-bottom: 0; }
.c17 { width: 17px; } .c18 { width: 18px; } .c19 { width: 19px; } .c36 { width: 36px; } .c41 { width: 41px; } .c43 { width: 43px; } .c44 { width: 44px; } .c48 { width: 48px; } .c50 { width: 50px; }
.c54 { width: 54px; } .c57 { width: 57px; } .c71 { width: 71px; } .c72 { width: 72px; } .c82 { width: 82px; } .c85 { width: 85px; }

.status { height: 14px; flex: none; display: grid; grid-template-columns: 286px 289fr 290fr 289fr 286fr; background: linear-gradient(#22469f, #142f77); color: #fff; line-height: 15px; }
.status span + span { border-left: 1px solid #3e5da8; padding-left: 4px; }

.brightness { position: absolute; left: calc(50% - 80px); bottom: 13px; width: 160px; height: 43px; border-radius: 7px; background: #2e333a; box-shadow: 0 1px 5px #0006; display: flex; align-items: center; gap: 14px; padding: 0 14px; }
.brightness svg { width: 15px; height: 15px; }
.brightness input { appearance: none; flex: 1; min-width: 0; height: 4px; border-radius: 2px; background: #098ff5; }
.brightness input::-webkit-slider-thumb { appearance: none; width: 4px; height: 4px; border-radius: 2px; background: #098ff5; }
```
